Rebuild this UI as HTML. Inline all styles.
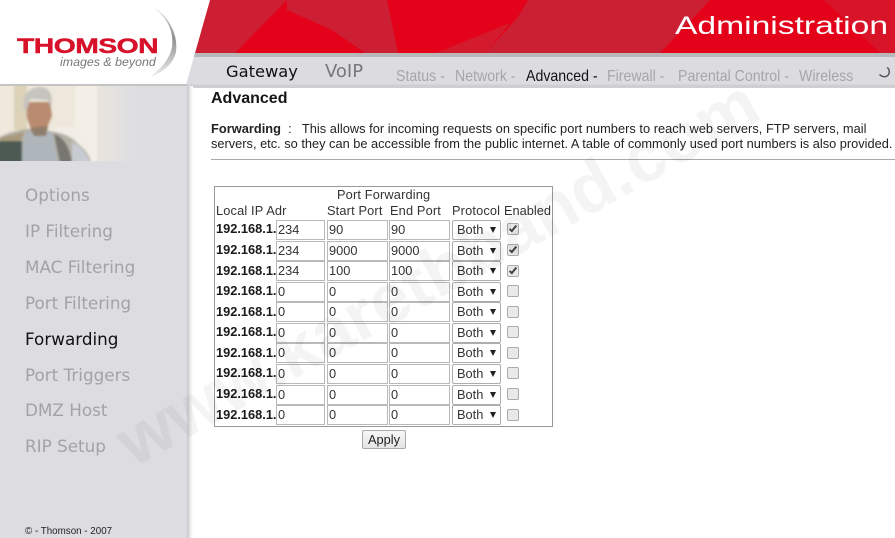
<!DOCTYPE html>
<html><head><meta charset="utf-8"><style>
html,body{margin:0;padding:0;background:#fff}
#p{position:relative;width:895px;height:538px;overflow:hidden;background:#fff;font-family:"Liberation Sans",sans-serif;color:#111}
#p div,#p span.a{position:absolute;white-space:nowrap}
.s{font-family:"DejaVu Sans",sans-serif;font-size:16.8px;color:#a3a3a5;left:25px;line-height:22px}
.n{font-size:16px;color:#a6a6aa;top:68px;line-height:18px;transform-origin:0 0;transform:scaleX(.885)}
.t{font-size:12.8px;line-height:14px;color:#333;letter-spacing:.15px}
.b{font-size:12.8px;font-weight:bold;line-height:14px;left:216px;color:#1a1a1a}
.i{height:18px;border:1px solid #b9b9b9;box-sizing:content-box;background:rgba(255,255,255,.55);font-size:12.8px;line-height:18px;padding-left:1px;color:#333}
.w{width:46px;left:276px}.x{width:58px;left:327px}.y{width:58px;left:389px}
.l{left:452px;width:47px;height:18px;border:1px solid #adadad;border-radius:2px;background:rgba(255,255,255,.6);font-size:12.8px;line-height:18px;text-indent:4px;color:#333}
.l:after{content:"";position:absolute;right:4px;top:6px;border-left:3.5px solid transparent;border-right:3.5px solid transparent;border-top:6px solid #222}
.c{left:507px;width:10px;height:10px;border:1px solid #ababab;border-radius:2px;background:#e9e9ea}
.k:after{content:"";position:absolute;left:3px;top:0;width:2px;height:6px;border:solid #444;border-width:0 2px 2px 0;transform:rotate(40deg)}
</style></head><body><div id="p">

<svg style="position:absolute;left:0;top:0" width="895" height="90">
<defs><linearGradient id="g" x1="0" y1="0" x2="0" y2="1"><stop offset="0" stop-color="#dcdce0"/><stop offset=".9" stop-color="#dcdce0"/><stop offset="1" stop-color="#c9c9cc"/></linearGradient>
<linearGradient id="sw" x1="0" y1="0" x2="0" y2="1"><stop offset="0" stop-color="#e8e8e8"/><stop offset=".45" stop-color="#8f8f8f"/><stop offset="1" stop-color="#eeeeee"/></linearGradient></defs>
<rect x="180" y="53" width="715" height="34" fill="url(#g)"/>
<rect x="190" y="53" width="705" height="4" fill="#b8b8ba"/>
<polygon points="210,0 895,0 895,53 195,53" fill="#e30219"/>
<polygon points="210,0 287,0 235,53 195,53" fill="#cd1f33"/>
<polygon points="287,0 387,0 398,53 365,53 332,30 287,10" fill="#cd1f33"/>
<polygon points="436,53 510,23 486,53" fill="#d41a2d"/>
<polygon points="528,0 710,0 660,53 486,53 518,17" fill="#cb2034"/>
<polygon points="824,0 895,0 895,53 880,53" fill="#d81428"/>
<polygon points="0,0 210,0 195,53 186,85 0,85" fill="#fff"/>
<rect x="0" y="84" width="187" height="2" fill="#c4c4c4"/>
<rect x="187" y="85" width="708" height="3" fill="#cfcfd1"/>
<path d="M152 6C172 18 178 38 176 52C173 64 164 72 150 77C162 68 170 58 172 47C174 32 168 18 152 6Z" fill="url(#sw)"/>
</svg>

<div style="left:17px;top:36px;font-size:21px;font-weight:bold;color:#d8112a;line-height:21px;transform-origin:0 0;transform:scaleX(1.35);letter-spacing:-.4px;-webkit-text-stroke:.4px #d8112a">THOMSON</div>
<div style="left:60px;top:55px;font-size:12.4px;font-style:italic;color:#77777a;line-height:15px">images &amp; beyond</div>
<div style="left:675px;top:12px;font-size:25px;color:#fff;line-height:28px;transform-origin:0 0;transform:scaleX(1.345)">Administration</div>

<div style="left:226px;top:63px;font-family:'DejaVu Sans',sans-serif;font-size:16.3px;color:#111;line-height:18px">Gateway</div>
<div style="left:325px;top:63px;font-family:'DejaVu Sans',sans-serif;font-size:18px;color:#777;line-height:18px">VoIP</div>
<div class="n" style="left:396px">Status -</div>
<div class="n" style="left:455px">Network -</div>
<div class="n" style="left:526px;color:#111">Advanced -</div>
<div class="n" style="left:607px">Firewall -</div>
<div class="n" style="left:678px">Parental Control -</div>
<div class="n" style="left:799px">Wireless</div>
<svg style="position:absolute;left:876px;top:65px" width="16" height="16"><path d="M11 2.500C14 4 14 9 11 11C8.500 12.500 5.500 11.500 3.500 9.500" fill="none" stroke="#555" stroke-width="1.500"/></svg>

<div style="left:0;top:86px;width:187px;height:452px;background:#dddde1"></div>
<div style="left:187px;top:86px;width:6px;height:452px;background:linear-gradient(90deg,#c6c6c8,#f4f4f4 70%,#fff)"></div>

<svg style="position:absolute;left:0;top:86px" width="187" height="75">
<defs><linearGradient id="ph" x1="0" y1="0" x2="1" y2="0"><stop offset="0" stop-color="#efe9dc"/><stop offset=".55" stop-color="#eee7dc"/><stop offset="1" stop-color="#dddde1"/></linearGradient>
<filter id="bl"><feGaussianBlur stdDeviation="1.100"/></filter></defs>
<rect width="140" height="75" fill="url(#ph)"/>
<g filter="url(#bl)">
<rect x="14" y="-2" width="13" height="46" fill="#dbd2b8"/>
<rect x="75" y="-2" width="22" height="79" fill="#f4efe6"/>
<path d="M50 44C66 36 88 38 92 77L70 77Z" fill="#f2eee7"/>
<path d="M-2 52C8 46 20 44 28 43L50 45C62 47 72 50 78 58C86 64 90 70 91 77L-2 77Z" fill="#b3b1a6"/>
<path d="M26 46L52 46L58 77L20 77Z" fill="#aeb6bc"/>
<path d="M54 48C62 50 70 60 72 77L60 77Z" fill="#77766f"/>
<path d="M72 56C80 60 88 68 90 77L72 77Z" fill="#c7ccd2"/>
<path d="M0 52L24 46L20 56L0 58Z" fill="#a99a7d"/>
<path d="M26 16L50 16L52 30L46 44L32 46L27 32Z" fill="#b98b70"/>
<path d="M30 42L48 40L46 50L34 50Z" fill="#8e7d6a"/>
<path d="M24 24C21 6 32 1 40 1C48 1 54 7 51 22L48 14L30 13L27 24Z" fill="#c6c4be"/>
<rect x="-2" y="55" width="24" height="22" fill="#4d5a52"/>
</g></svg>

<div class="s" style="top:184px">Options</div>
<div class="s" style="top:220px">IP Filtering</div>
<div class="s" style="top:256px">MAC Filtering</div>
<div class="s" style="top:292px">Port Filtering</div>
<div class="s" style="top:328px;color:#111">Forwarding</div>
<div class="s" style="top:364px">Port Triggers</div>
<div class="s" style="top:399px">DMZ Host</div>
<div class="s" style="top:435px">RIP Setup</div>
<div style="left:25px;top:526px;font-size:9.800px;line-height:12px;color:#222">© - Thomson - 2007</div>

<div style="left:211px;top:90px;font-size:16px;font-weight:bold;line-height:18px;color:#151515">Advanced</div>
<div style="left:211px;top:122px;font-size:12.8px;line-height:14px;color:#222;letter-spacing:.03px"><b>Forwarding</b> &nbsp;:&nbsp; <span style="margin-left:3px">This allows for incoming requests on specific port numbers to reach web servers, FTP servers, mail</span></div>
<div style="left:211px;top:137px;font-size:12.8px;line-height:14px;color:#222">servers, etc. so they can be accessible from the public internet. A table of commonly used port numbers is also provided.</div>
<div style="left:211px;top:159px;width:684px;height:1px;background:#a9a9a9"></div>

<div style="left:214px;top:186px;width:337px;height:239px;border:1px solid #999"></div>
<div class="t" style="left:337px;top:188px">Port Forwarding</div>
<div class="t" style="left:216px;top:204px">Local IP Adr</div>
<div class="t" style="left:327px;top:204px">Start Port</div>
<div class="t" style="left:390px;top:204px">End Port</div>
<div class="t" style="left:452px;top:204px">Protocol</div>
<div class="t" style="left:504px;top:204px;letter-spacing:0">Enabled</div>

<div class="b" style="top:222px">192.168.1.</div><div class="i w" style="top:220px">234</div><div class="i x" style="top:220px">90</div><div class="i y" style="top:220px">90</div><div class="l" style="top:220px">Both</div><div class="c k" style="top:223px"></div>
<div class="b" style="top:243px">192.168.1.</div><div class="i w" style="top:241px">234</div><div class="i x" style="top:241px">9000</div><div class="i y" style="top:241px">9000</div><div class="l" style="top:241px">Both</div><div class="c k" style="top:244px"></div>
<div class="b" style="top:264px">192.168.1.</div><div class="i w" style="top:261px">234</div><div class="i x" style="top:261px">100</div><div class="i y" style="top:261px">100</div><div class="l" style="top:261px">Both</div><div class="c k" style="top:265px"></div>
<div class="b" style="top:284px">192.168.1.</div><div class="i w" style="top:282px">0</div><div class="i x" style="top:282px">0</div><div class="i y" style="top:282px">0</div><div class="l" style="top:282px">Both</div><div class="c" style="top:285px"></div>
<div class="b" style="top:305px">192.168.1.</div><div class="i w" style="top:302px">0</div><div class="i x" style="top:302px">0</div><div class="i y" style="top:302px">0</div><div class="l" style="top:302px">Both</div><div class="c" style="top:306px"></div>
<div class="b" style="top:325px">192.168.1.</div><div class="i w" style="top:323px">0</div><div class="i x" style="top:323px">0</div><div class="i y" style="top:323px">0</div><div class="l" style="top:323px">Both</div><div class="c" style="top:326px"></div>
<div class="b" style="top:346px">192.168.1.</div><div class="i w" style="top:343px">0</div><div class="i x" style="top:343px">0</div><div class="i y" style="top:343px">0</div><div class="l" style="top:343px">Both</div><div class="c" style="top:347px"></div>
<div class="b" style="top:366px">192.168.1.</div><div class="i w" style="top:364px">0</div><div class="i x" style="top:364px">0</div><div class="i y" style="top:364px">0</div><div class="l" style="top:364px">Both</div><div class="c" style="top:367px"></div>
<div class="b" style="top:387px">192.168.1.</div><div class="i w" style="top:385px">0</div><div class="i x" style="top:385px">0</div><div class="i y" style="top:385px">0</div><div class="l" style="top:385px">Both</div><div class="c" style="top:388px"></div>
<div class="b" style="top:408px">192.168.1.</div><div class="i w" style="top:405px">0</div><div class="i x" style="top:405px">0</div><div class="i y" style="top:405px">0</div><div class="l" style="top:405px">Both</div><div class="c" style="top:409px"></div>

<div style="left:362px;top:430px;width:42px;height:17px;border:1px solid #aaa;border-radius:2px;background:linear-gradient(#f7f7f7,#e4e4e4);font-size:12.8px;line-height:17px;text-align:center;color:#222">Apply</div>

<div style="left:122px;top:412px;font-size:70px;font-weight:bold;line-height:70px;color:rgba(0,0,0,.045);transform-origin:0 50%;transform:rotate(-29deg)">www.karetbband.com</div>
</div></body></html>
